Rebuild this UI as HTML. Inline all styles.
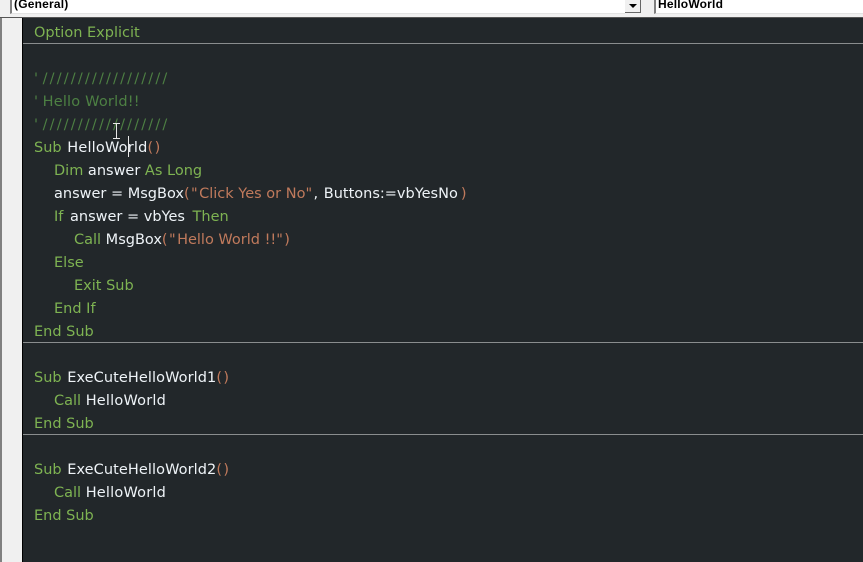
<!DOCTYPE html>
<html><head><meta charset="utf-8"><style>
html,body{margin:0;padding:0;width:863px;height:562px;overflow:hidden;background:#f0f0f0}
#top{position:absolute;left:0;top:0;width:863px;height:18px;background:#f0f0f0}
.box{position:absolute;top:0;height:13px;background:#fff;border-left:2px solid #808080;border-bottom:1px solid #e3e3e3;overflow:hidden;font:bold 12px/9px "Liberation Sans",sans-serif;color:#000;letter-spacing:.2px}
.box span{position:absolute;left:2px;top:0}
#btn{position:absolute;left:625px;top:0;width:15px;height:12px;background:#f0f0f0;border-right:1px solid #666;border-bottom:1px solid #666}
#btn i{position:absolute;left:4px;top:4px;width:0;height:0;border-left:4px solid transparent;border-right:4px solid transparent;border-top:4px solid #000}
#gutter{position:absolute;left:0;top:18px;height:544px;background:#f0f0f0;border-left:2px solid #808080;box-sizing:border-box;border-right:1px solid #000;width:23px}
#ed{position:absolute;left:23px;top:18px;width:840px;height:544px;background:#22272a}
#topline{position:absolute;left:0;top:17px;width:863px;height:1px;background:#555}
.l{position:absolute;white-space:pre;font:14.5px/23px "DejaVu Sans",sans-serif;color:#eef3f7;height:23px}
.k{color:#7eb352}.c{color:#4d8043}.s{color:#c07a5c}
.p{letter-spacing:1.4px}
.w{letter-spacing:.2px}
.sl{letter-spacing:2.16px}
.sep{position:absolute;left:23px;width:840px;height:1px;background:#8a8d8e}
</style></head><body>
<div id="top">
<div class="box" style="left:10px;width:613px"><span>(General)</span></div>
<div id="btn"><i></i></div>
<div class="box" style="left:654px;width:209px"><span>HelloWorld</span></div>
</div>
<div id="topline"></div>
<div id="gutter"></div>
<div id="ed"></div>
<div class="sep" style="top:43px"></div>
<div class="sep" style="top:342px"></div>
<div class="sep" style="top:434px"></div>

<div class="l k" style="left:34px;top:22px">Option Explicit</div>
<div class="l c" style="left:34px;top:68px">' <span class="sl">//////////////////</span></div>
<div class="l c" style="left:34px;top:91px">' <span class="w">Hello World!!</span></div>
<div class="l c" style="left:34px;top:114px">' <span class="sl">//////////////////</span></div>
<div class="l" style="left:34px;top:137px"><span class="k">Sub</span> <span class="w" style="margin-left:1px">HelloWorld</span><span class="s p">()</span></div>
<div class="l" style="left:54px;top:160px"><span class="k">Dim</span> answer <span class="k">As Long</span></div>
<div class="l" style="left:54px;top:183px">answer = MsgBox<span class="s"><span class="p">("</span>Click Yes or No<span class="p">"</span></span><span style="margin-right:1px">,</span> Buttons:=vbYesNo<span class="s" style="margin-left:3px">)</span></div>
<div class="l" style="left:54px;top:206px"><span class="k">If</span> <span style="margin-left:2px">answer = vbYes</span> <span class="k" style="margin-left:3px">Then</span></div>
<div class="l" style="left:74px;top:229px"><span class="k">Call</span> MsgBox<span class="s"><span class="p">("</span>Hello World !!<span class="p">")</span></span></div>
<div class="l k" style="left:54px;top:252px">Else</div>
<div class="l k" style="left:74px;top:275px">Exit Sub</div>
<div class="l k" style="left:54px;top:298px">End If</div>
<div class="l k" style="left:34px;top:321px">End Sub</div>
<div class="l" style="left:34px;top:367px"><span class="k">Sub</span> <span style="margin-left:1px;letter-spacing:.08px">ExeCuteHelloWorld1</span><span class="s p">()</span></div>
<div class="l" style="left:54px;top:390px"><span class="k">Call</span> <span class="w">HelloWorld</span></div>
<div class="l k" style="left:34px;top:413px">End Sub</div>
<div class="l" style="left:34px;top:459px"><span class="k">Sub</span> <span style="margin-left:1px;letter-spacing:.08px">ExeCuteHelloWorld2</span><span class="s p">()</span></div>
<div class="l" style="left:54px;top:482px"><span class="k">Call</span> <span class="w">HelloWorld</span></div>
<div class="l k" style="left:34px;top:505px">End Sub</div>

<div style="position:absolute;left:128px;top:136px;width:1px;height:21px;background:#e8e8e8"></div>
<svg style="position:absolute;left:111px;top:122px" width="11" height="18" viewBox="0 0 11 18"><path d="M2 1.5H9M5.5 1.5V16.5M2 16.5H9" stroke="#e6e6e6" stroke-width="1" fill="none"/></svg>
</body></html>
